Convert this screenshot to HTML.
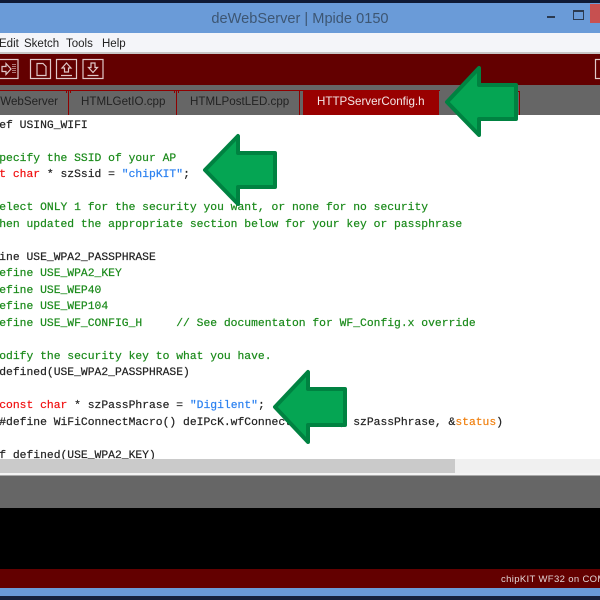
<!DOCTYPE html>
<html><head><meta charset="utf-8"><style>
html,body{margin:0;padding:0;width:600px;height:600px;overflow:hidden;background:#fff}
div{position:absolute}
.code{left:-28px;top:116px;font:11.35px/16.5px "Liberation Mono",monospace;color:#222;white-space:pre;filter:blur(.3px);-webkit-text-stroke:.2px}
.g{color:#1a8a1a}.r{color:#f01010}.b{color:#2a80f0}.o{color:#f08010}
.tab{top:84px;height:27px;font:11.6px/36px "Liberation Sans",sans-serif;color:#222;white-space:pre}
.sep{top:90px;width:1px;height:25px;background:#8f0000}
.menu{top:36px;font:11.5px/16px "Liberation Sans",sans-serif;color:#222}
</style></head><body>
<div style="left:0;top:0;width:600px;height:3px;background:#0f1a35"></div>
<div style="left:0;top:3px;width:600px;height:30px;background:#6a9bd8"></div>
<div style="left:0;top:3px;width:600px;height:30px;text-align:center;font:14.6px/32px 'Liberation Sans',sans-serif;color:#3d5673">deWebServer | Mpide 0150</div>
<div style="left:547px;top:16px;width:8px;height:2px;background:#2b3a50"></div>
<div style="left:573px;top:10px;width:9px;height:7px;border:1px solid #2b3a50;border-top-width:2px"></div>
<div style="left:590px;top:4px;width:10px;height:19px;background:#c75050"></div>
<div style="left:0;top:33px;width:600px;height:19px;background:#f4f5f9"></div>
<div class="menu" style="left:-1px">Edit</div><div class="menu" style="left:24px">Sketch</div><div class="menu" style="left:66px">Tools</div><div class="menu" style="left:102px">Help</div>
<div style="left:0;top:52px;width:600px;height:2px;background:#c8c6c6"></div>
<div style="left:0;top:54px;width:600px;height:31px;background:#630000"></div>
<svg style="position:absolute;left:0;top:54px" width="600" height="31" fill="none" stroke="#e0c8c8" stroke-width="1.2">
<rect x="-3" y="5.500" width="21" height="19"/><path d="M2 12.500h4v-3l5 5.500-5 5.500v-3h-4z"/><path d="M13 10v10M15 10v10" stroke-dasharray="1 1"/>
<rect x="30.500" y="5.500" width="20" height="19"/><path d="M37 9.500h6l3 3v9h-9z"/>
<rect x="56.500" y="5.500" width="20" height="19"/><path d="M66.500 9l4.500 5h-2.500v4h-4v-4h-2.500zM61 21.500h11"/>
<rect x="83" y="5.500" width="20" height="19"/><path d="M91 9h4v4.500h2.500l-4.500 5-4.500-5h2.500zM87.500 21.500h11"/>
<rect x="595.500" y="5.500" width="10" height="19"/>
</svg>
<div style="left:0;top:85px;width:600px;height:30px;background:#666"></div>
<div style="left:0;top:90px;width:440px;height:1px;background:#8f0000"></div>
<div class="sep" style="left:68px"></div><div class="sep" style="left:176px"></div><div class="sep" style="left:299px"></div>
<div style="left:66px;top:90px;width:5px;height:3px;border-left:1px solid #8f0000;border-right:1px solid #8f0000;box-sizing:border-box"></div>
<div style="left:174px;top:90px;width:5px;height:3px;border-left:1px solid #8f0000;border-right:1px solid #8f0000;box-sizing:border-box"></div>
<div class="tab" style="left:-3px"> WebServer</div>
<div class="tab" style="left:81px">HTMLGetIO.cpp</div>
<div class="tab" style="left:190px">HTMLPostLED.cpp</div>
<div style="left:303px;top:90px;width:136px;height:25px;background:#990000;border-radius:2px 2px 0 0"></div>
<div class="tab" style="left:317px;color:#f4e6e6">HTTPServerConfig.h</div>
<div style="left:490px;top:91px;width:30px;height:24px;border-right:1px solid #8f0000;border-top:1px solid #8f0000;box-sizing:border-box"></div>
<div style="left:0;top:115px;width:600px;height:344px;background:#fff;overflow:hidden">
<div class="code" style="top:2.500px">#ifdef USING_WIFI

<span class="g">// Specify the SSID of your AP</span>
<span class="r">const char</span> * szSsid = <span class="b">"chipKIT"</span>;

<span class="g">// Select ONLY 1 for the security you want, or none for no security</span>
<span class="g">// then updated the appropriate section below for your key or passphrase</span>

#define USE_WPA2_PASSPHRASE
<span class="g">//#define USE_WPA2_KEY</span>
<span class="g">//#define USE_WEP40</span>
<span class="g">//#define USE_WEP104</span>
<span class="g">//#define USE_WF_CONFIG_H     // See documentaton for WF_Config.x override</span>

<span class="g">// Modify the security key to what you have.</span>
#if defined(USE_WPA2_PASSPHRASE)

    <span class="r">const char</span> * szPassPhrase = <span class="b">"Digilent"</span>;
    #define WiFiConnectMacro() deIPcK.wfConnect(szSsid, szPassPhrase, &amp;<span class="o">status</span>)

#elif defined(USE_WPA2_KEY)</div>
</div>
<div style="left:0;top:459px;width:600px;height:14px;background:#f0f0f0"></div>
<div style="left:0;top:459px;width:455px;height:14px;background:#cacaca"></div>
<div style="left:0;top:473px;width:600px;height:2px;background:#f4f4f4"></div>
<div style="left:0;top:475px;width:600px;height:1px;background:#aaa"></div>
<div style="left:0;top:476px;width:600px;height:32px;background:#666"></div>
<div style="left:0;top:508px;width:600px;height:61px;background:#000"></div>
<div style="left:0;top:569px;width:600px;height:19px;background:#630000"></div>
<div style="left:501px;top:569px;font:9.5px/22px 'Liberation Sans',sans-serif;color:#e2d4d4;white-space:pre;letter-spacing:.35px">chipKIT WF32 on COM3</div>
<div style="left:0;top:588px;width:600px;height:8px;background:#6a9bd8"></div>
<div style="left:0;top:596px;width:600px;height:4px;background:#16223c"></div>
<svg style="position:absolute;left:0;top:0" width="600" height="600" fill="#05a553" stroke="#008241" stroke-width="4" stroke-linejoin="round">
<path d="M447 102L479 68V85H516V119H479V135Z"/>
<path d="M205 170L238 136V153H275V187H238V204Z"/>
<path d="M275 407L308 372V389H345V425H308V442Z"/>
</svg>
</body></html>
